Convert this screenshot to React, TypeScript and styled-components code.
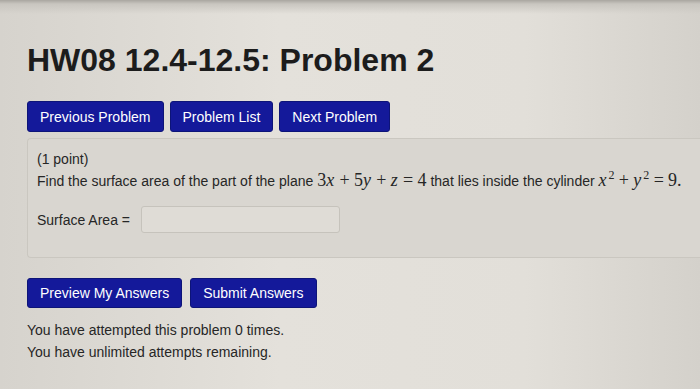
import styled, { createGlobalStyle } from "styled-components";

const GlobalStyle = createGlobalStyle`
  html, body {
    margin: 0;
    padding: 0;
  }
  body {
    width: 700px;
    height: 389px;
    overflow: hidden;
    font-family: "Liberation Sans", Arial, Helvetica, sans-serif;
    color: #262626;
    background:
      linear-gradient(to bottom, #a9a6a0 0, #c9c6c0 4px, rgba(222, 219, 213, 0) 14px),
      linear-gradient(to right, #d6d3cd 0, #e4e1db 40%, #e2dfd9 75%, #d4d1cb 100%);
  }
`;

const Page = styled.div`
  padding: 43px 0 0 27px;
`;

const Title = styled.h1`
  margin: 0;
  font-size: 32px;
  line-height: 35px;
  font-weight: bold;
  color: #1c1c1c;
`;

const ButtonRow = styled.div<{ $gap: number; $top: number }>`
  display: flex;
  gap: ${(p) => p.$gap}px;
  margin-top: ${(p) => p.$top}px;
`;

const Button = styled.button<{ $height: number }>`
  height: ${(p) => p.$height}px;
  padding: 0 12px;
  border: 1px solid #0d1478;
  border-radius: 3px;
  background: #14199a;
  color: #fff;
  font-family: "Liberation Sans", Arial, sans-serif;
  font-size: 14px;
  cursor: pointer;
`;

const Well = styled.div`
  margin-top: 6px;
  margin-right: -10px;
  padding: 10px 9px 24px;
  background: #d9d6d0;
  border: 1px solid #cac7c0;
  border-right: none;
  border-radius: 4px 0 0 4px;
  font-size: 14px;
`;

const Points = styled.div`
  line-height: 20px;
  margin-bottom: 1px;
`;

const Statement = styled.div`
  height: 22px;
  line-height: 22px;
  white-space: nowrap;
`;

const Math = styled.span`
  font-family: "Liberation Serif", "Times New Roman", serif;
  font-size: 18px;
  line-height: 1;
`;

const Var = styled.i`
  font-family: "Liberation Serif", "Times New Roman", serif;
  margin-right: 1px;
`;

const Op = styled.span`
  margin: 0 0.24em;
`;

const Sup = styled.sup`
  font-size: 12px;
  line-height: 0;
  margin-left: 1px;
`;

const AnswerRow = styled.div`
  display: flex;
  align-items: center;
  gap: 11px;
  margin-top: 14px;
`;

const Label = styled.label`
  font-size: 14px;
`;

const AnswerInput = styled.input`
  width: 199px;
  height: 27px;
  box-sizing: border-box;
  border: 1px solid #c6c3bc;
  border-radius: 3px;
  background: #dfdcd6;
  outline: none;
`;

const Attempts = styled.div`
  margin-top: 11px;
  font-size: 14px;
  line-height: 22px;
  color: #262626;
`;

export default function App() {
  return (
    <>
      <GlobalStyle />
      <Page>
        <Title>HW08 12.4-12.5: Problem 2</Title>

        <ButtonRow $gap={6} $top={23}>
          <Button $height={31}>Previous Problem</Button>
          <Button $height={31}>Problem List</Button>
          <Button $height={31}>Next Problem</Button>
        </ButtonRow>

        <Well>
          <Points>(1 point)</Points>
          <Statement>
            Find the surface area of the part of the plane{" "}
            <Math>
              3<Var>x</Var>
              <Op>+</Op>5<Var>y</Var>
              <Op>+</Op>
              <Var>z</Var>
              <Op>=</Op>4
            </Math>{" "}
            that lies inside the cylinder{" "}
            <Math>
              <Var>x</Var>
              <Sup>2</Sup>
              <Op>+</Op>
              <Var>y</Var>
              <Sup>2</Sup>
              <Op>=</Op>9.
            </Math>
          </Statement>
          <AnswerRow>
            <Label htmlFor="answer">Surface Area =</Label>
            <AnswerInput id="answer" type="text" />
          </AnswerRow>
        </Well>

        <ButtonRow $gap={8} $top={20}>
          <Button $height={30}>Preview My Answers</Button>
          <Button $height={30}>Submit Answers</Button>
        </ButtonRow>

        <Attempts>
          You have attempted this problem 0 times.
          <br />
          You have unlimited attempts remaining.
        </Attempts>
      </Page>
    </>
  );
}
